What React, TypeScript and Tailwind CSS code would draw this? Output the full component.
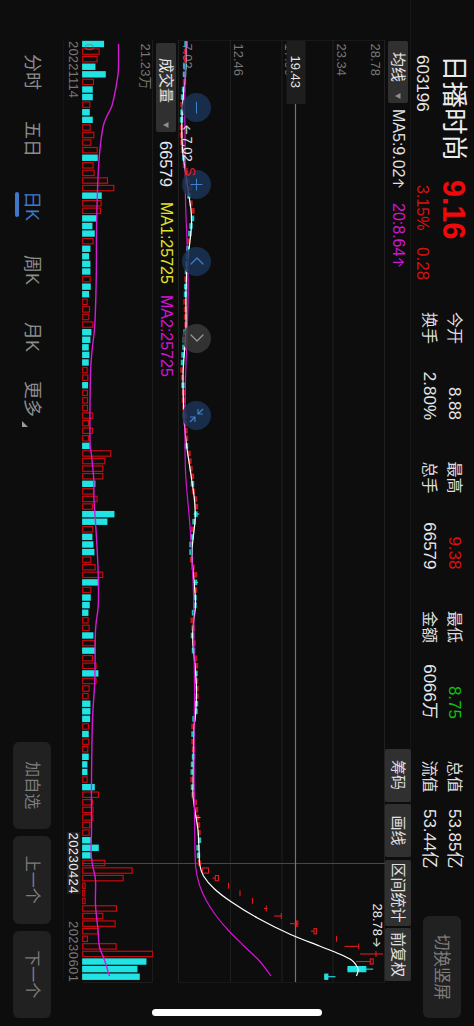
import { ChevronLeft, ChevronRight, Minus, Plus } from 'lucide-react'
import type { ReactNode } from 'react'

type Point = [number, number]

type Candle = {
  index: number
  low: number
  bodyLow: number
  bodyHigh: number
  high: number
  falling?: boolean
}

const UP = '#e01a20'
const DOWN = '#22e3e3'
const BAR_START = 44
const BAR_STEP = 7.583

// Volume in thousands of lots, negative on a falling day.
const volumes = [
  -66, 52, 46, -40, -71, 35, -32, -32, 24, -23, -32, 25, 36, 27, 46, -47, 34, 37, 77, 96, -59, 58, 56, -45, -31, -38,
  34, -25, -21, -25, -25, 25, -26, -21, 16, 23, 21, 33, -28, -25, -20, -22, -20, 16, 18, -18, 17, 17, 17, 33, 20, 32,
  20, -23, 87, 69, 63, 63, -40, 35, 46, 32, -97, -76, 33, -31, -34, -37, 27, 40, 63, -49, 27, -26, -23, -19, 19, 22,
  -34, 39, -40, 32, 43, -49, 43, 22, 19, -25, -25, -24, 20, -20, 21, 18, -20, -16, -16, 16, -38, 50, 32, 34, 33, 24,
  22, -26, -50, -26, 69, 151, 124, 10, 9, 10, 104, 63, 100, 48, 17, 103, 213, -193, -166, -173,
]

const quietLevels = [
  186.5, 186, 186, 185.5, 185, 185, 184, 183, 182.5, 182.5, 182, 182, 182, 182.5, 183, 184.5, 185, 187, 188.5, 190.5,
  189.5, 191.5, 193.5, 193, 191.5, 190.3, 189, 188.5, 188, 187.5, 187, 186.5, 186.2, 186, 185.5, 186, 186, 186.5,
  185.5, 184.5, 184.5, 183.5, 183, 182.5, 183, 183.5, 184, 184, 184.5, 186, 186, 186.5, 187, 187, 189.5, 190.5, 191.5,
  193, 193, 194, 196, 197, 196.5, 194.5, 193, 192.5, 191.5, 191.5, 192, 193.5, 196, 196, 196, 195.5, 195.5, 194, 192.7,
  193.5, 193, 194.5, 194, 196, 197, 196.5, 197, 197.5, 197.5, 197, 196.5, 194.5, 193.5, 193.5, 193.5, 194, 194, 193,
  192.7, 192.5, 193, 193.5, 196, 197, 198, 199, 199.5, 200, 198.5, 199, 200,
]

const rallyCandles: Candle[] = [
  { index: 109, low: 203, bodyLow: 203, bodyHigh: 209, high: 209 },
  { index: 110, low: 213, bodyLow: 215.8, bodyHigh: 219, high: 219 },
  { index: 111, low: 229, bodyLow: 229, bodyHigh: 229, high: 229 },
  { index: 112, low: 240.5, bodyLow: 240.5, bodyHigh: 240.5, high: 240.5 },
  { index: 113, low: 253, bodyLow: 253, bodyHigh: 253, high: 253 },
  { index: 114, low: 264.5, bodyLow: 266.8, bodyHigh: 266.8, high: 268 },
  { index: 115, low: 274.5, bodyLow: 281.8, bodyHigh: 281.8, high: 281.8 },
  { index: 116, low: 290.5, bodyLow: 297, bodyHigh: 298.3, high: 298.3 },
  { index: 117, low: 311.5, bodyLow: 314.5, bodyHigh: 317, high: 317 },
  { index: 118, low: 337, bodyLow: 337, bodyHigh: 337, high: 337 },
  { index: 119, low: 345, bodyLow: 359.2, bodyHigh: 359.2, high: 359.2 },
  { index: 120, low: 360.5, bodyLow: 376.5, bodyHigh: 376.5, high: 383.5 },
  { index: 121, low: 356.5, bodyLow: 370.8, bodyHigh: 373.7, high: 373.7 },
  { index: 122, low: 348, bodyLow: 348.5, bodyHigh: 366.3, high: 373.7, falling: true },
  { index: 123, low: 325, bodyLow: 325.3, bodyHigh: 328.3, high: 336, falling: true },
]

const ma5: Point[] = [
  [41, 186.5], [75, 186], [90, 184.3], [110, 182.8], [130, 182.3], [150, 183], [165, 185], [190, 188.5], [210, 191.5],
  [225, 192], [245, 190], [260, 188], [290, 186.5], [330, 186.5], [350, 185], [375, 183.5], [405, 184], [425, 185],
  [445, 187], [465, 190], [485, 193], [500, 195], [518, 195.7], [535, 194], [550, 192.5], [565, 193], [590, 195.3],
  [605, 196], [620, 194.3], [635, 193.2], [650, 193.8], [665, 195.5], [690, 197], [715, 196], [730, 194.3], [780, 193.7],
  [795, 193.5], [810, 195.3], [830, 198.5], [850, 199.5], [865, 200.3], [876, 204], [889, 215], [902, 232], [918, 258],
  [934, 290], [946, 320], [954, 340], [960, 352], [965, 356.5], [970, 358.7], [976, 357],
]

const ma20: Point[] = [
  [41, 186.5], [100, 185.3], [150, 185.7], [200, 186], [240, 187.5], [280, 188.6], [310, 188.3], [350, 187], [380, 186],
  [430, 185.5], [460, 185.7], [480, 186.5], [520, 190], [540, 191.5], [570, 193], [600, 194.2], [640, 194.4],
  [690, 195], [730, 194.6], [780, 194.6], [840, 195.3], [868, 196.3], [885, 200], [900, 206.5], [915, 216],
  [930, 228.5], [946, 244.5], [961, 260], [976, 271.5],
]

const volumeAverage: Point[] = [
  [44, 119], [68, 119], [78, 118], [95, 115], [107, 112], [116, 107.5], [125, 104], [140, 101.5], [160, 99.5],
  [190, 98], [230, 97], [275, 96.8], [325, 95.3], [350, 92.6], [375, 91], [440, 90.5], [455, 92], [480, 94.3],
  [500, 94.5], [530, 96.5], [570, 98.6], [605, 98.8], [630, 96], [680, 95.3], [720, 93], [780, 92], [830, 92],
  [852, 91.6], [866, 93.2], [880, 96], [905, 96], [930, 98.5], [947, 100], [960, 105], [976, 110],
]

const stats = [
  { label: '今开', value: '8.88', tone: 'text-[#e6e6e6]', subLabel: '换手', subValue: '2.80%' },
  { label: '最高', value: '9.38', tone: 'text-[#dc1010]', subLabel: '总手', subValue: '66579' },
  { label: '最低', value: '8.75', tone: 'text-[#0ec40e]', subLabel: '金额', subValue: '6066万' },
  { label: '总值', value: '53.85亿', tone: 'text-[#e6e6e6]', subLabel: '流值', subValue: '53.44亿' },
]

const tools = [
  { label: '筹码', width: 'w-[53px]' },
  { label: '画线', width: 'w-[53px]' },
  { label: '区间统计', width: 'w-[66px]' },
  { label: '前复权', width: 'w-[53px]' },
]

const periods = [
  { label: '分时', width: 'w-[67px]' },
  { label: '五日', width: 'w-[70px]' },
  { label: '日K', width: 'w-[64px]' },
  { label: '周K', width: 'w-[67px]' },
  { label: '月K', width: 'w-[59px]' },
]

const barX = (index: number) => BAR_START + index * BAR_STEP

function smoothPath(points: Point[]) {
  return points
    .map(([x, level], i) => {
      if (i === 0) return `M${x} ${-level}`

      const before = points[i - 2] ?? points[i - 1]
      const from = points[i - 1]
      const after = points[i + 1] ?? points[i]
      const c1 = [from[0] + (x - before[0]) / 6, -(from[1] + (level - before[1]) / 6)]
      const c2 = [x - (after[0] - from[0]) / 6, -(level - (after[1] - from[1]) / 6)]

      return `C${c1[0]} ${c1[1]} ${c2[0]} ${c2[1]} ${x} ${-level}`
    })
    .join(' ')
}

function CandleMark({ candle }: { candle: Candle }) {
  const { index, low, bodyLow, bodyHigh, high, falling } = candle
  const color = falling ? DOWN : UP
  const x = barX(index)

  return (
    <g stroke={color} strokeWidth={1.1}>
      {bodyLow > low && <line x1={x} x2={x} y1={-low} y2={-bodyLow} />}
      {high > bodyHigh && <line x1={x} x2={x} y1={-bodyHigh} y2={-high} />}
      {bodyHigh > bodyLow ? (
        <rect x={x - 2.6} y={-bodyHigh} width={5.2} height={bodyHigh - bodyLow} fill={falling ? color : 'none'} />
      ) : (
        <line x1={x - 3} x2={x + 3} y1={-bodyLow} y2={-bodyLow} />
      )}
    </g>
  )
}

function PriceChart() {
  return (
    <svg className="block" width="1026" height="207" viewBox="0 -385.5 1026 207">
      <g stroke="#202020" strokeWidth={1}>
        <path d="M40.500 -385.500V-178.500M982.500 -385.500V-178.500" stroke="#181818" />
        <path d="M40 -385H982M40 -333.500H982M40 -282.500H982M40 -231H982M40 -179H982" />
      </g>
      <g fill="#777" fontSize={13}>
        <text x="43.500" y="-371.500">28.78</text>
        <text x="43.500" y="-337.500">23.34</text>
        <text x="43.500" y="-285">17.90</text>
        <text x="43.500" y="-234.500">12.46</text>
        <text x="43.500" y="-183.300">7.02</text>
      </g>
      <line x1="863.500" x2="863.500" y1="-385.500" y2="-178.500" stroke="#484848" />
      <line x1="104" x2="982" y1="-296" y2="-296" stroke="#747474" strokeWidth={1.2} />

      {quietLevels.map((level, index) => (
        <rect
          key={index}
          x={barX(index) - 2.8}
          y={-level - 1.7}
          width={5.6}
          height={3.4}
          fill={volumes[index] > 0 ? UP : DOWN}
          opacity={0.85}
        />
      ))}
      <path d="M514 -194V-200M817.500 -196V-201M582.500 -194V-198.500" stroke={DOWN} />
      {rallyCandles.map((candle) => (
        <CandleMark candle={candle} key={candle.index} />
      ))}
      <path d={smoothPath(ma5)} fill="none" stroke="#fff" strokeWidth={1.2} />
      <path d={smoothPath(ma20)} fill="none" stroke="#d414d4" strokeWidth={1.2} />

      <g fill="#e8e8e8" fontSize={13}>
        <text className="font-['Inter']" x="124" y="-183.500" fontSize={12}>←</text>
        <text x="136.500" y="-183">7.02</text>
        <text x="903.500" y="-373">28.78</text>
        <text className="font-['Inter']" x="936.500" y="-373.500" fontSize={12}>→</text>
      </g>

      <rect x="41" y="-306" width="63" height="19" fill="#1e1e1e" />
      <text x="55.500" y="-291.500" fill="#e8e8e8" fontSize={13}>19.43</text>
    </svg>
  )
}

function VolumeChart() {
  return (
    <svg className="block" width="1026" height="90.5" viewBox="0 -153.5 1026 90.5">
      <path d="M40 -153H982.500V-83M40 -63.500H982" fill="none" stroke="#1c1c1c" />
      <line x1="863.500" x2="863.500" y1="-153.500" y2="-82.500" stroke="#484848" />
      <text x="43.500" y="-141.500" fill="#777" fontSize={13} textLength={46}>21.23万</text>
      {volumes.map((volume, index) => {
        const size = Math.abs(volume) / 3

        return volume > 0 ? (
          <rect
            key={index}
            x={barX(index) - 2.7}
            y={-83.1 - size + 0.8}
            width={5.4}
            height={Math.max(size - 0.9, 1)}
            fill="none"
            stroke="#d2080c"
            strokeWidth={1.15}
          />
        ) : (
          <rect key={index} x={barX(index) - 3.2} y={-82.6 - size} width={6.4} height={size} fill={DOWN} />
        )
      })}
      <text x="43.500" y="-85" fill="#777" fillOpacity={0.6} fontSize={13}>0</text>
      <path d={smoothPath(volumeAverage)} fill="none" stroke="#d41ad4" strokeWidth={1.4} />
      <rect x="832" y="-81" width="62" height="13.500" fill="#1e1e1e" />
      <g fontSize={13} fill="#777">
        <text x="41" y="-69.300" textLength={57}>20221114</text>
        <text x="832.500" y="-69.300" fill="#f0f0f0" textLength={61}>20230424</text>
        <text x="921" y="-69.300" textLength={61}>20230601</text>
      </g>
    </svg>
  )
}

function DropdownChip({ children, className }: { children: ReactNode; className: string }) {
  return (
    <button
      className={`flex h-5 shrink-0 items-center justify-between rounded-xs bg-[#303030] text-[15px] leading-5 text-[#e6e6e6] ${className}`}
      type="button"
    >
      {children}
      <svg width="6" height="6" viewBox="0 0 6 6">
        <path d="M0 0.500H6L3 6Z" fill="#8f8f8f" />
      </svg>
    </button>
  )
}

function RoundButton({ children, muted = false }: { children: ReactNode; muted?: boolean }) {
  return (
    <button
      className={`flex size-[29px] items-center justify-center rounded-full ${
        muted ? 'bg-[#3a3a3a]/85 text-[#9a9a9a]' : 'bg-[#1b3455]/85 text-[#3f7fcc]'
      }`}
      type="button"
    >
      {children}
    </button>
  )
}

function Header() {
  return (
    <header className="flex h-[63px] shrink-0">
      <div className="w-[312px] shrink-0 pl-[55px]">
        <div className="flex h-[38px] items-center pt-[2px]">
          <h1 className="w-[125px] text-[26.5px] leading-none text-[#ececec]">日播时尚</h1>
          <span className="text-[30.5px] leading-none font-bold text-[#ee0a0a]">9.16</span>
        </div>
        <div className="flex h-[27px] items-center text-[17px] leading-none">
          <span className="w-[130px] text-[#e6e6e6]">603196</span>
          <span className="w-[62px] text-base leading-none text-[#dc1010]">3.15%</span>
          <span className="text-[#dc1010]">0.28</span>
        </div>
      </div>
      <div className="flex shrink-0 gap-[41.5px] pt-[7px]">
        {stats.map((stat) => (
          <dl className="grid w-[108px] grid-cols-[auto_auto] content-start justify-between text-base leading-[25px] text-[#dedede]" key={stat.label}>
            <dt>{stat.label}</dt>
            <dd className={`text-right text-[17px] leading-[25px] ${stat.tone}`}>{stat.value}</dd>
            <dt>{stat.subLabel}</dt>
            <dd className="text-right text-[17px] leading-[25px] text-[#e6e6e6]">{stat.subValue}</dd>
          </dl>
        ))}
      </div>
      <button className="mt-[13px] mr-2 ml-auto h-[38px] w-[102px] rounded-md bg-[#212121] text-[16.5px] text-[#7d7d7d]" type="button">
        切换竖屏
      </button>
    </header>
  )
}

function Toolbar() {
  return (
    <div className="mr-[45px] flex h-[25.5px] shrink-0 items-center border-t border-[#161616] pl-[41px]">
      <DropdownChip className="w-[62px] pr-1 pl-[11px]">均线</DropdownChip>
      <span className="ml-1.5 w-[94px] text-base leading-none whitespace-nowrap text-[#e0e0e0]">
        MA5:9.02<span className="font-['Inter'] text-sm leading-none">↑</span>
      </span>
      <span className="text-base leading-none whitespace-nowrap text-[#d414d4]">
        20:8.64<span className="font-['Inter'] text-sm leading-none">↑</span>
      </span>
      <div className="-mt-px ml-auto flex gap-[2.5px]">
        {tools.map((tool) => (
          <button
            className={`h-[25.5px] rounded-xs bg-[#303030] text-[15px] whitespace-nowrap text-[#e0e0e0] ${tool.width}`}
            key={tool.label}
            type="button"
          >
            {tool.label}
          </button>
        ))}
      </div>
    </div>
  )
}

function VolumeLegend() {
  return (
    <div className="relative flex h-[25px] shrink-0 items-center pl-[43px] text-[16.5px] leading-none">
      <DropdownChip className="w-[89px] pr-1 pl-[15px]">成交量</DropdownChip>
      <span className="ml-[9px] w-[61px] text-[#e6e6e6]">66579</span>
      <span className="w-[93px] text-base leading-none text-[#e3e329]">MA1:25725</span>
      <span className="text-base leading-none text-[#d414d4]">MA2:25725</span>
      <span className="absolute inset-y-0 left-[863px] w-px bg-[#484848]" />
    </div>
  )
}

function Footer() {
  return (
    <footer className="flex h-[63px] shrink-0 pl-[54px] text-[18px] leading-none text-[#8c8c8c]">
      <nav className="flex pt-[22px]">
        {periods.map((period) => (
          <div className={period.width} key={period.label}>
            {period.label === '日K' ? (
              <span className="inline-flex flex-col gap-[4px] text-[#3f78c8]">
                {period.label}
                <span className="ml-px h-[3.500px] w-[25px] rounded-full bg-[#3f78c8]" />
              </span>
            ) : (
              period.label
            )}
          </div>
        ))}
        <div className="flex items-end self-start">
          更多
          <svg className="-mb-px ml-1" width="6" height="6" viewBox="0 0 6 6">
            <path d="M6 0V6H0Z" fill="#9a9a9a" />
          </svg>
        </div>
      </nav>
      <div className="mt-3 mr-2 ml-auto flex gap-[7px] text-base">
        {['加自选', '上一个', '下一个'].map((label) => (
          <button className="h-[38px] w-[87.500px] rounded-md bg-[#212121] text-[#7d7d7d]" key={label} type="button">
            {label}
          </button>
        ))}
      </div>
    </footer>
  )
}

export default function App() {
  return (
    <div className="h-[1026px] w-[474px] overflow-hidden bg-[#0d0d0d]">
      <main className="relative flex h-[474px] w-[1026px] origin-top-left translate-x-[474px] rotate-90 flex-col bg-[#0d0d0d] font-['Liberation_Sans','Noto_Sans_CJK_SC',sans-serif]">
        <Header />
        <Toolbar />
        <div className="relative shrink-0">
          <PriceChart />
          <div className="absolute bottom-[4px] left-[92.500px] flex gap-12">
            <RoundButton>
              <Minus size={19} strokeWidth={1.3} />
            </RoundButton>
            <RoundButton>
              <Plus size={19} strokeWidth={1.3} />
            </RoundButton>
            <RoundButton>
              <ChevronLeft size={24} strokeWidth={1.2} />
            </RoundButton>
            <RoundButton muted>
              <ChevronRight size={24} strokeWidth={1.2} />
            </RoundButton>
            <RoundButton>
              <svg width="15" height="15" viewBox="0 0 15 15" fill="none" stroke="currentColor" strokeWidth="1.2">
                <path d="M1 1L6 6M6 1V6H1M14 14L9 9M9 14V9H14" />
              </svg>
            </RoundButton>
          </div>
          <span className="absolute bottom-[5px] left-[167px] text-sm leading-none text-[#e01a20]">S</span>
        </div>
        <VolumeLegend />
        <VolumeChart />
        <Footer />
        <div className="absolute top-[152px] left-[1009px] h-[170px] w-[7px] rounded-full bg-white" />
      </main>
    </div>
  )
}
